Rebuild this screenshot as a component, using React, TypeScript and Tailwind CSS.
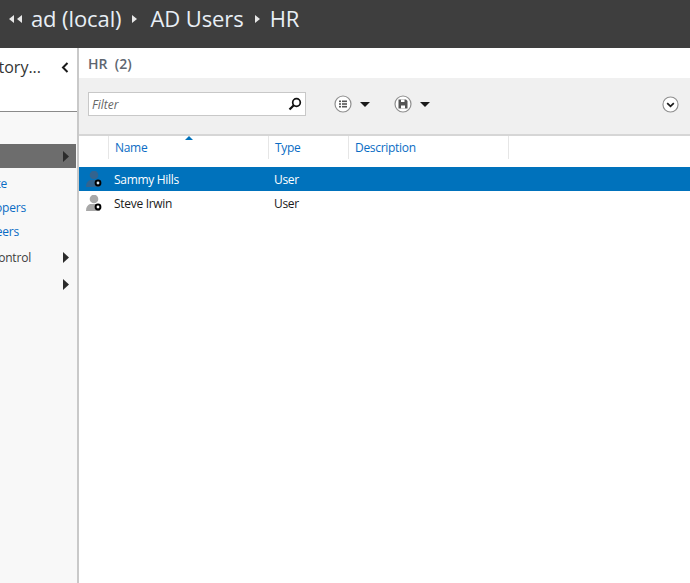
import { ReactNode } from "react";

function Arrow() {
  return (
    <svg width="6" height="11" viewBox="0 0 6 11" className="fill-[#2b2b2b]">
      <path d="M0 0l6 5.5L0 11z" />
    </svg>
  );
}

function SideRow({ text, end, h, arrow, blue, top }: { text?: string; end: number; h: string; arrow?: boolean; blue?: boolean; top?: string }) {
  return (
    <div className={`relative flex items-center justify-end overflow-hidden ${h} ${top ?? ""}`}>
      <div className="absolute inset-0 flex items-center justify-end overflow-hidden whitespace-nowrap">
        <span className={`text-[12px] tracking-[-0.2px] ${blue ? "text-[#0a6cc4]" : "text-[#3d3d3d]"}`} style={{ marginRight: end }}>
          {text}
        </span>
      </div>
      {arrow && (
        <div className="mr-[8px]">
          <Arrow />
        </div>
      )}
    </div>
  );
}

function Circle({ children, size = 18 }: { children: ReactNode; size?: number }) {
  return (
    <svg width={size} height={size} viewBox="0 0 18 18" fill="none">
      <circle cx="9" cy="9" r="8" fill="#ffffff" stroke="#8f8f8f" strokeWidth="1.2" />
      {children}
    </svg>
  );
}

function Caret() {
  return (
    <svg width="10" height="5" viewBox="0 0 10 5" className="fill-[#1a1a1a]">
      <path d="M0 0h10L5 5z" />
    </svg>
  );
}

function UserIcon({ selected }: { selected?: boolean }) {
  const fill = selected ? "#33648f" : "#a8a8a8";
  return (
    <svg width="16" height="16" viewBox="0 0 16 16">
      <circle cx="8" cy="4" r="4.3" fill={fill} />
      <path d="M0 16c0-4 1.5-6 4-7h7c2 1 3 3 3 7z" fill={fill} />
      <circle cx="12" cy="12" r="3.4" fill="#000000" />
      <circle cx="12" cy="12" r="1.4" fill={selected ? "#d8e6f2" : "#ffffff"} />
    </svg>
  );
}

function UserRow({ name, selected }: { name: string; selected?: boolean }) {
  return (
    <div className={`flex items-center h-[24px] text-[12px] tracking-[-0.3px] ${selected ? "bg-[#0072bc] text-white" : "text-[#1a1a1a]"}`}>
      <div className="w-[35px] pl-[7px] flex items-center">
        <UserIcon selected={selected} />
      </div>
      <span className="w-[160px] pt-[1px]">{name}</span>
      <span className="pt-[1px]">User</span>
    </div>
  );
}

function HeaderCell({ label, w, sorted }: { label: string; w: string; sorted?: boolean }) {
  return (
    <div className={`relative h-[23px] flex items-center pl-[6px] border-r border-[#e6e6e6] text-[12px] tracking-[-0.3px] text-[#0a6cc4] ${w}`}>
      {label}
      {sorted && (
        <svg width="8" height="4" viewBox="0 0 8 4" className="absolute left-[76px] top-0 fill-[#0072bc]">
          <path d="M0 4h8L4 0z" />
        </svg>
      )}
    </div>
  );
}

export default function App() {
  return (
    <div className="w-[690px] h-[583px] overflow-hidden bg-white flex flex-col font-['Open_Sans','Noto_Sans',sans-serif]">
      <div className="h-[48px] bg-[#3e3e3e] flex items-center pb-[12px] pl-[9px] text-[#e8eef5] text-[22px] tracking-[-0.1px]">
        <svg width="14" height="8" viewBox="0 0 14 8" className="fill-[#e8e8e8] mr-[8px] mt-[1px]">
          <path d="M5 0v8L0 4zM13 0v8L8 4z" />
        </svg>
        <span>ad (local)</span>
        <svg width="5" height="8" viewBox="0 0 5 8" className="fill-[#e8e8e8] ml-[11px] mr-[13px] mt-[1px]">
          <path d="M0 0l5 4-5 4z" />
        </svg>
        <span>AD Users</span>
        <svg width="5" height="8" viewBox="0 0 5 8" className="fill-[#e8e8e8] ml-[11px] mr-[10px] mt-[1px]">
          <path d="M0 0l5 4-5 4z" />
        </svg>
        <span>HR</span>
      </div>

      <div className="flex-1 flex min-h-0">
        <aside className="w-[79px] shrink-0 bg-[#f8f8f8] border-r-2 border-[#c9c9c9] flex flex-col">
          <div className="h-[64px] bg-white border-b border-[#8a8a8a] pt-[7px]">
            <div className="flex items-center h-[24px]">
              <div className="flex-1 min-w-0 flex justify-end overflow-hidden whitespace-nowrap">
                <span className="text-[16px] text-[#333333] mr-[20px]">Active Directory...</span>
              </div>
              <svg width="8" height="11" viewBox="0 0 8 11" fill="none" stroke="#1a1a1a" strokeWidth="2" className="mr-[8px]">
                <path d="M6.5 1L2 5.5 6.5 10" />
              </svg>
            </div>
          </div>
          <div className="h-[32px]" />
          <div className="h-[24px] bg-[#6d6d6d] mr-[1px] flex items-center justify-end pr-[7px]">
            <Arrow />
          </div>
          <SideRow text="Corporate" end={70} h="h-[24px]" blue top="mt-[4px]" />
          <SideRow text="Developers" end={51} h="h-[24px]" blue />
          <SideRow text="Engineers" end={58} h="h-[24px]" blue />
          <SideRow text="Dynamic Access Control" end={46} h="h-[27px]" arrow />
          <SideRow h="h-[27px]" end={0} arrow />
        </aside>

        <main className="flex-1 min-w-0 flex flex-col">
          <div className="h-[30px] flex items-center pl-[9px] text-[14px] font-semibold text-[#5e6670] whitespace-pre">
            HR  (2)
          </div>
          <div className="h-[58px] bg-[#f0f0f0] border-b-2 border-[#d6d6d6] flex items-start pt-[14px] pl-[9px]">
            <div className="w-[218px] h-[24px] bg-white border border-[#c8c8c8] flex items-center pl-[3px] pr-[3px] justify-between">
              <span className="text-[12px] italic text-[#666666] pt-[1px]">Filter</span>
              <svg width="14" height="14" viewBox="0 0 14 14" fill="none" stroke="#111111" strokeWidth="1.7">
                <circle cx="8.5" cy="5.5" r="3.8" />
                <path d="M5.8 8.2L1.5 12.5" strokeWidth="2.2" />
              </svg>
            </div>
            <div className="ml-[28px] mt-[3px] flex items-center gap-[8px]">
              <Circle>
                <g fill="#555555">
                  <rect x="5" y="5.5" width="2" height="1.6" />
                  <rect x="8" y="5.5" width="5" height="1.6" />
                  <rect x="5" y="8.2" width="2" height="1.6" />
                  <rect x="8" y="8.2" width="5" height="1.6" />
                  <rect x="5" y="10.9" width="2" height="1.6" />
                  <rect x="8" y="10.9" width="5" height="1.6" />
                </g>
              </Circle>
              <Caret />
            </div>
            <div className="ml-[24px] mt-[3px] flex items-center gap-[8px]">
              <Circle>
                <path d="M4.5 4.5h7.5l1.5 1.5v7.5h-9z" fill="#555555" />
                <rect x="7" y="4.5" width="3.5" height="2.5" fill="#ffffff" />
                <rect x="7" y="10.5" width="4" height="3" fill="#ffffff" />
              </Circle>
              <Caret />
            </div>
            <div className="ml-auto mr-[11px] mt-[4px]">
              <Circle size={17}>
                <path d="M5.5 7.5L9 11l3.5-3.5" stroke="#1a1a1a" strokeWidth="1.8" fill="none" />
              </Circle>
            </div>
          </div>
          <div className="h-[31px] flex items-start">
            <div className="w-[30px] h-[23px] border-r border-[#e6e6e6]" />
            <HeaderCell label="Name" w="w-[160px]" sorted />
            <HeaderCell label="Type" w="w-[80px]" />
            <HeaderCell label="Description" w="w-[160px]" />
          </div>
          <UserRow name="Sammy Hills" selected />
          <UserRow name="Steve Irwin" />
        </main>
      </div>
    </div>
  );
}
